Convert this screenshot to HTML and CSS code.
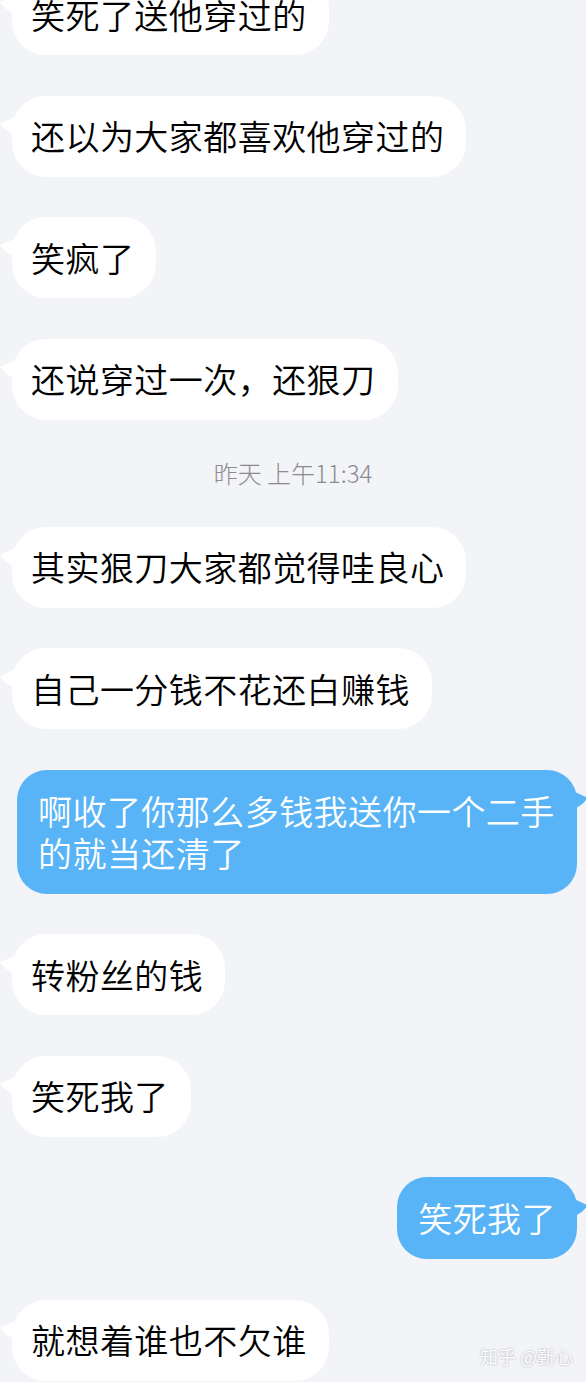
FILE: index.html
```html
<!DOCTYPE html>
<html lang="zh-CN">
<head>
  <meta charset="UTF-8">
  <title>聊天记录</title>
  <link rel="stylesheet" href="styles.css">
</head>
<body>

<div class="chat">
  <div class="msg left"><div class="bubble">笑死了送他穿过的</div></div>
  <div class="msg left"><div class="bubble">还以为大家都喜欢他穿过的</div></div>
  <div class="msg left"><div class="bubble">笑疯了</div></div>
  <div class="msg left"><div class="bubble">还说穿过一次，还狠刀</div></div>

  <div class="time">昨天 上午11:34</div>

  <div class="msg left"><div class="bubble">其实狠刀大家都觉得哇良心</div></div>
  <div class="msg left"><div class="bubble">自己一分钱不花还白赚钱</div></div>
  <div class="msg right"><div class="bubble">啊收了你那么多钱我送你一个二手的就当还清了</div></div>
  <div class="msg left"><div class="bubble">转粉丝的钱</div></div>
  <div class="msg left"><div class="bubble">笑死我了</div></div>
  <div class="msg right"><div class="bubble">笑死我了</div></div>
  <div class="msg left"><div class="bubble">就想着谁也不欠谁</div></div>
</div>

<div class="watermark">知乎 @斳心</div>

</body>
</html>
```

FILE: styles.css
```css
html, body {
  margin: 0;
  padding: 0;
  background-color: #f3f4f8;
  overflow: hidden;
}

body {
  width: 586px;
  height: 1382px;
  position: relative;
  font-family: "Noto Sans CJK SC", "Noto Sans", sans-serif;
}

.chat {
  display: flex;
  flex-direction: column;
  gap: 40.5px;
  margin-top: -26px;
}

.msg {
  display: flex;
}

.msg.left {
  justify-content: flex-start;
  padding-left: 12px;
}

.msg.right {
  justify-content: flex-end;
  padding-right: 9px;
}

.bubble {
  position: relative;
  max-width: 518px;
  padding: 19.5px 22px 19.5px 19px;
  border-radius: 34px;
  font-size: 34px;
  font-weight: 350;
  line-height: 42px;
  letter-spacing: 0.45px;
  background-color: #ffffff;
  color: #000000;
}

.msg.right .bubble {
  padding: 20px 21px 20px 21px;
  border-radius: 30px;
  background-color: #58b4f6;
  color: #ffffff;
}

/* tails */
.bubble::before {
  content: "";
  position: absolute;
  top: 22px;
  width: 14px;
  height: 18px;
  background-color: inherit;
}

.msg.left .bubble::before {
  left: -12px;
  clip-path: polygon(0 35%, 100% 0, 100% 100%, 40% 70%);
}

.msg.right .bubble::before {
  right: -11px;
  clip-path: polygon(100% 35%, 0 0, 0 100%, 60% 70%);
}

.time {
  text-align: center;
  font-size: 24px;
  font-weight: 300;
  line-height: 26px;
  color: #8b8b90;
}

.watermark {
  position: absolute;
  right: 13px;
  bottom: 13px;
  font-size: 18px;
  color: #ffffff;
  text-shadow: 0 0 2px rgba(0, 0, 0, 0.35);
}
```
